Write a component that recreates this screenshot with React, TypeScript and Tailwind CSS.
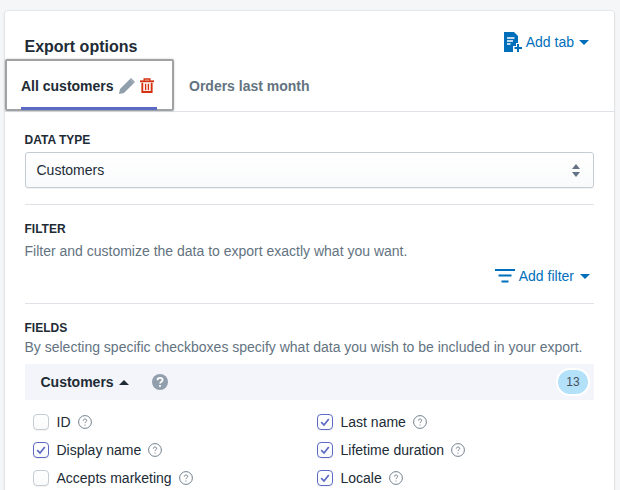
import React from "react";

function Help() {
  return (
    <svg width="14" height="14" viewBox="0 0 14 14" fill="none" className="shrink-0">
      <circle cx="7" cy="7" r="6.400" stroke="#637381" strokeWidth="0.900" />
      <path d="M5.300 5.600c0-1 .8-1.600 1.700-1.600s1.700.6 1.700 1.500c0 1.200-1.700 1.300-1.700 2.600" stroke="#637381" strokeWidth="0.900" />
      <circle cx="7" cy="10" r="0.600" fill="#637381" />
    </svg>
  );
}

function Check({ label, checked }: { label: string; checked?: boolean }) {
  return (
    <div className="flex items-center h-[28px]">
      <span
        className={
          "w-4 h-4 rounded-[4px] border flex items-center justify-center shrink-0 bg-gradient-to-b from-white to-[#f9fafb] shadow-[0_1px_0_rgba(22,29,37,0.05)] " +
          (checked ? "border-[#5c6ac4]" : "border-[#c4cdd5]")
        }
      >
        {checked && (
          <svg width="12" height="12" viewBox="0 0 12 12" fill="none">
            <path d="M2.200 6.200 5 9l4.800-6" stroke="#5c6ac4" strokeWidth="1.700" />
          </svg>
        )}
      </span>
      <span className="ml-2 text-[14px] text-[#212b36]">{label}</span>
      <span className="ml-[7px] flex"><Help /></span>
    </div>
  );
}

function Caret() {
  return (
    <svg width="10" height="5" viewBox="0 0 10 5" className="ml-[6px]">
      <path d="M0 0h10L5 5z" fill="#006fbb" />
    </svg>
  );
}

export default function App() {
  return (
    <div
      className="w-[620px] h-[490px] overflow-hidden bg-[#f4f6f8] pt-[11px] pl-[4.500px] pr-[6px]"
      style={{ fontFamily: '"Liberation Sans", Arial, sans-serif' }}
    >
      <div className="bg-white rounded-t-[3px] h-[600px] shadow-[0_0_0_1px_rgba(63,63,68,0.05),0_1px_3px_0_rgba(63,63,68,0.15)]">
        <div className="flex justify-between pl-[20px] pr-[25px] h-[49px]">
          <h2 className="pt-[25px] text-[16px] leading-[21px] font-bold text-[#212b36]">Export options</h2>
          <div className="flex items-center h-[20px] mt-[21px] text-[14px] text-[#006fbb]">
            <svg width="18" height="20" viewBox="0 0 18 20" className="mr-[4px]">
              <path d="M0 0h10l4 4v7h-2v3H9v6H0z" fill="#006fbb" />
              <path d="M3 6h7.500M3 9h6M3 12h3.500" stroke="#fff" strokeWidth="1.400" />
              <path d="M14 12v8M10.500 16h7.500" stroke="#006fbb" strokeWidth="2" />
            </svg>
            Add tab
            <svg width="10" height="5" viewBox="0 0 10 5" className="ml-[5px]">
              <path d="M0 0h10L5 5z" fill="#006fbb" />
            </svg>
          </div>
        </div>
        <div className="flex border-b border-[#dfe3e8] h-[52px] relative">
          <div className="relative flex items-start w-[169.500px] h-[52px] border-2 border-[#a0a2a4] rounded-[2px] shadow-[0_0_2px_rgba(0,0,0,0.25)] -mt-px pl-[14.500px] pt-[15px]">
            <span className="text-[14px] leading-[20px] font-bold text-[#212b36]">All customers</span>
            <svg width="18" height="18" viewBox="0 0 18 18" className="ml-[4px] mt-[1px]">
              <path d="M1 17l1-5L12 2l4 4L6 16z" fill="#919eab" />
              <path d="M13 1l4 4-1 1-4-4z" fill="#919eab" />
            </svg>
            <svg width="14" height="15" viewBox="0 0 15 16" className="ml-[4px] mt-[2px]" fill="none">
              <path d="M0 3.500h15" stroke="#d4310f" strokeWidth="2" />
              <path d="M4.500 3V1h6v2" stroke="#d4310f" strokeWidth="1.500" />
              <path d="M2.500 5v10h10V5" stroke="#d4310f" strokeWidth="2" />
              <path d="M6 6v7M9 6v7" stroke="#d4310f" strokeWidth="1.500" />
            </svg>
            <span className="absolute left-[14.500px] bottom-[-1px] w-[136px] h-[3px] bg-[#5c6ac4]" />
          </div>
          <div className="pl-[15px] pt-[16px] text-[14px] leading-[20px] font-bold text-[#637381]">Orders last month</div>
        </div>
        <div className="pl-[20px] pr-[20px]">
          <div className="pt-[20px] pb-[16px] border-b border-[#dfe3e8]">
            <div className="text-[12px] leading-[16px] font-bold text-[#212b36]">DATA TYPE</div>
            <div className="mt-[4px] h-[36px] flex items-center justify-between px-[11px] rounded-[3px] border border-[#c4cdd5] bg-gradient-to-b from-white to-[#f9fafb] shadow-[0_1px_0_rgba(22,29,37,0.05)] text-[14px] text-[#212b36]">
              Customers
              <svg width="8" height="13" viewBox="0 0 8 13" className="mr-[2px]">
                <path d="M0 5h8L4 0zM0 8h8l-4 5z" fill="#637381" />
              </svg>
            </div>
          </div>
          <div className="pt-[16px] border-b border-[#dfe3e8] h-[99px]">
            <div className="text-[12px] leading-[16px] font-bold text-[#212b36]">FILTER</div>
            <div className="mt-[4px] text-[14px] leading-[20px] text-[#637381]">Filter and customize the data to export exactly what you want.</div>
            <div className="flex justify-end items-center mt-[5px] pr-[4px] h-[20px] text-[14px] text-[#006fbb]">
              <svg width="20" height="14" viewBox="0 0 20 14" className="mr-[4px]">
                <path d="M0 1h20M3.500 6.500h13M6.500 12.500h7" stroke="#006fbb" strokeWidth="2" />
              </svg>
              Add filter
              <Caret />
            </div>
          </div>
          <div className="pt-[16px]">
            <div className="text-[12px] leading-[16px] font-bold text-[#212b36]">FIELDS</div>
            <div className="mt-[1px] text-[14px] leading-[20px] text-[#637381]">By selecting specific checkboxes specify what data you wish to be included in your export.</div>
            <div className="mt-[7px] h-[36px] bg-[#f4f5fa] flex items-center pl-[16px] pr-[4px]">
              <span className="text-[14px] font-bold text-[#212b36]">Customers</span>
              <svg width="10" height="5" viewBox="0 0 10 5" className="ml-[5px]">
                <path d="M0 5h10L5 0z" fill="#212b36" />
              </svg>
              <svg width="16" height="16" viewBox="0 0 16 16" className="ml-[23px]">
                <circle cx="8" cy="8" r="8" fill="#919eab" />
                <path d="M5.500 6.200c0-1.500 1.100-2.300 2.500-2.300s2.600.8 2.600 2.100c0 1.700-2.500 1.800-2.500 3.500" stroke="#fff" strokeWidth="1.800" fill="none" />
                <circle cx="8" cy="12" r="1.100" fill="#fff" />
              </svg>
              <span className="ml-auto w-[34px] h-[28px] rounded-full bg-[#b4e1fa] border-2 border-white flex items-center justify-center text-[12px] text-[#454f5b]">13</span>
            </div>
            <div className="grid grid-cols-[284px_1fr] pl-[8px] pt-[8px]">
              <Check label="ID" />
              <Check label="Last name" checked />
              <Check label="Display name" checked />
              <Check label="Lifetime duration" checked />
              <Check label="Accepts marketing" />
              <Check label="Locale" checked />
            </div>
          </div>
        </div>
      </div>
    </div>
  );
}
